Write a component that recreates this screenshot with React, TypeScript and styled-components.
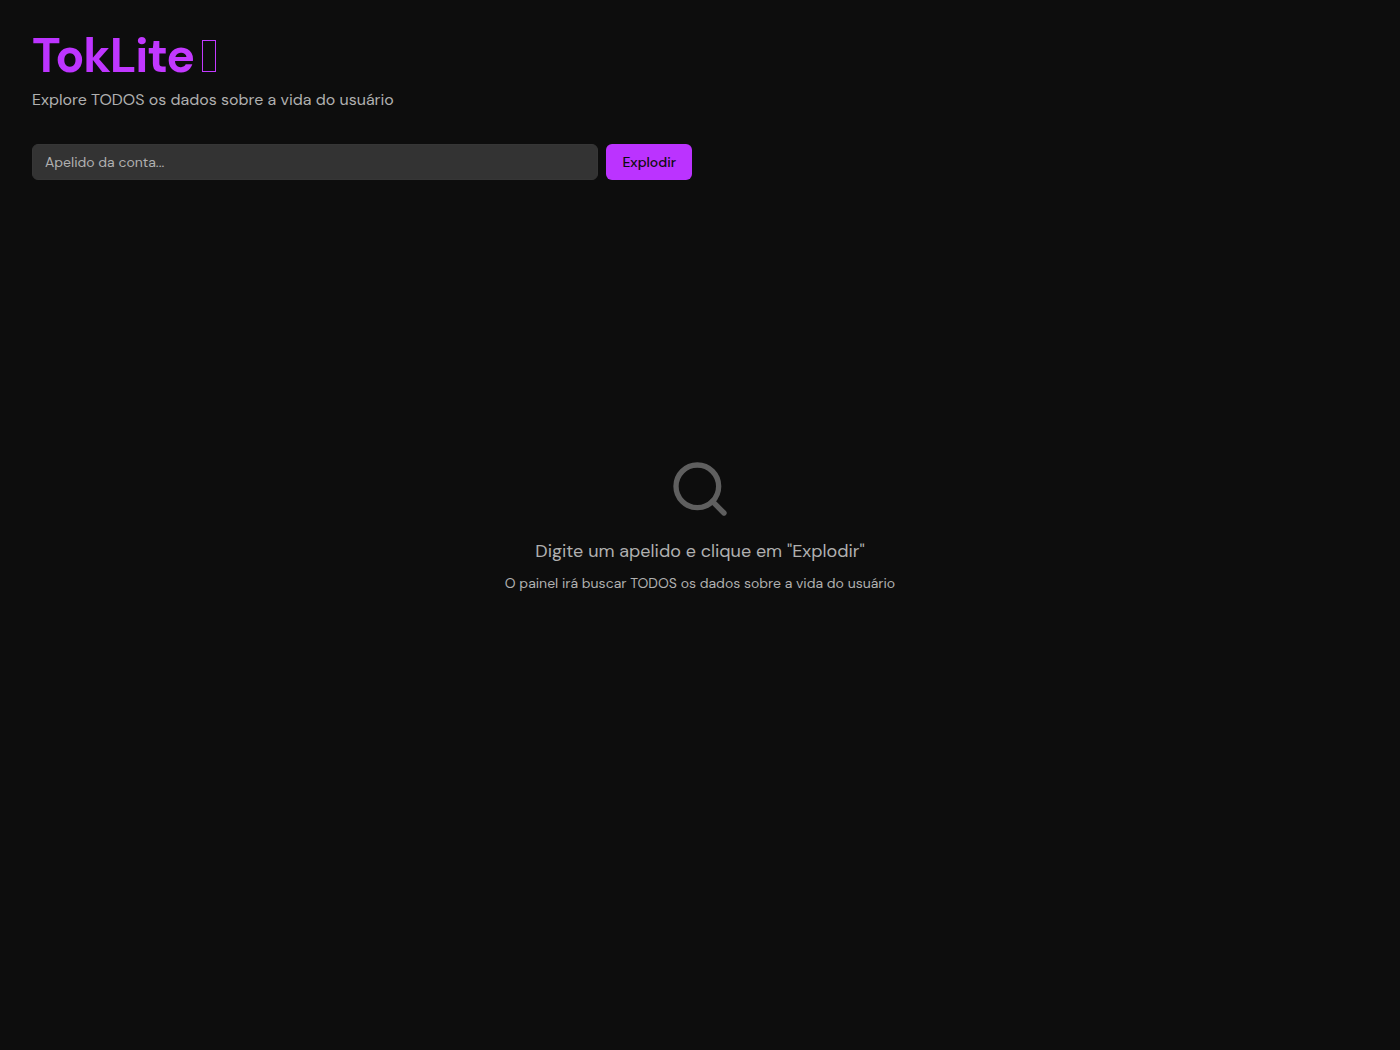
import React, { useState } from "react";
import styled, { createGlobalStyle } from "styled-components";
import { Search } from "lucide-react";

const GlobalStyle = createGlobalStyle`
  *, *::before, *::after { box-sizing: border-box; }
  body {
    margin: 0;
    background: #0d0d0d;
    color: #b0b0b0;
    font-family: "DM Sans", Inter, "Open Sans", sans-serif;
  }
  h1, p { margin: 0; }
`;

const Page = styled.div`
  min-height: 100vh;
  padding: 32px;
  display: grid;
  grid-template-rows: 1fr auto 1fr;
`;

const Header = styled.header`
  display: flex;
  flex-direction: column;
  gap: 8px;
`;

const Title = styled.h1`
  display: flex;
  align-items: center;
  gap: 8px;
  font-size: 48px;
  line-height: 48px;
  font-weight: 700;
  letter-spacing: -0.025em;
  color: transparent;
  background: linear-gradient(to right, #bb33ff, #ff66ff);
  background-clip: text;
  -webkit-background-clip: text;
`;

const TitleMark = styled.span`
  width: 14px;
  height: 32px;
  border: 1px solid #c23aff;
`;

const Text = styled.p<{ $size: number; $line: number }>`
  font-size: ${({ $size }) => $size}px;
  line-height: ${({ $line }) => $line}px;
`;

const SearchForm = styled.form`
  display: flex;
  gap: 8px;
  width: calc(50% - 8px);
  margin-top: 24px;
`;

const Field = styled.input`
  flex: 1;
  min-width: 0;
  height: 36px;
  padding: 4px 12px;
  border: 1px solid #363636;
  border-radius: 6px;
  background: #333333;
  color: #f2f2f2;
  font: inherit;
  font-size: 14px;
  &::placeholder { color: #b0b0b0; opacity: 1; }
`;

const Button = styled.button`
  height: 36px;
  padding: 0 16px;
  border: 0;
  border-radius: 6px;
  background: #bb33ff;
  color: #0d0d0d;
  font: inherit;
  font-size: 14px;
  font-weight: 500;
  cursor: pointer;
`;

const EmptyState = styled.main`
  display: flex;
  flex-direction: column;
  align-items: center;
  gap: 8px;
  text-align: center;
`;

const EmptyIcon = styled(Search)`
  margin-bottom: 8px;
  opacity: 0.5;
`;

export default function App() {
  const [nickname, setNickname] = useState("");
  return (
    <>
      <GlobalStyle />
      <Page>
        <Header>
          <Title>
            TokLite
            <TitleMark aria-hidden="true" />
          </Title>
          <Text $size={16} $line={24}>Explore TODOS os dados sobre a vida do usuário</Text>
          <SearchForm onSubmit={(event) => event.preventDefault()}>
            <Field
              aria-label="Apelido da conta"
              placeholder="Apelido da conta..."
              value={nickname}
              onChange={(event) => setNickname(event.target.value)}
            />
            <Button type="submit">Explodir</Button>
          </SearchForm>
        </Header>
        <EmptyState>
          <EmptyIcon size={64} aria-hidden="true" />
          <Text $size={18} $line={28}>Digite um apelido e clique em "Explodir"</Text>
          <Text $size={14} $line={20}>O painel irá buscar TODOS os dados sobre a vida do usuário</Text>
        </EmptyState>
      </Page>
    </>
  );
}
